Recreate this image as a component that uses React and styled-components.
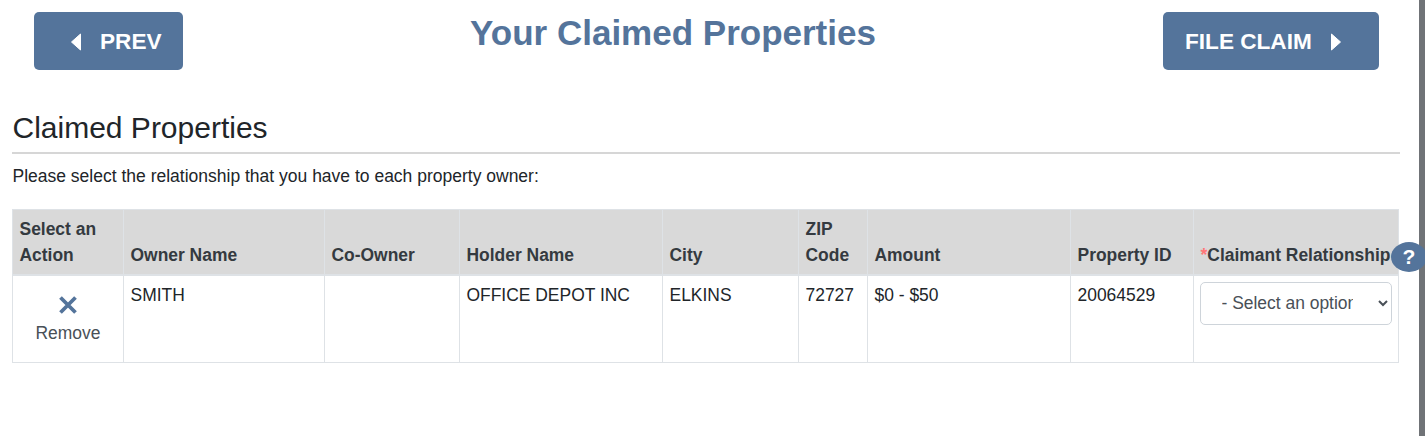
import React from "react";
import styled, { createGlobalStyle } from "styled-components";

const GlobalStyle = createGlobalStyle`
    html, body {
        margin : 0;
        padding : 0;
        background : #fff;
        overflow : hidden;
    }
    body {
        font-family : "Liberation Sans", Arial, sans-serif;
        font-size : 17.45px;
        line-height : 26px;
        color : #212529;
    }
`

const Page = styled.div`
    position : relative;
    display : flex;
    width : 1425px;
    height : 436px;
    overflow : hidden;
`

const Content = styled.main`
    flex : 1;
    padding : 12px 19px 0 12px;
`

const ScrollStrip = styled.div`
    width : 6px;
    background : #707377;
`

const TopBar = styled.div`
    display : flex;
    align-items : flex-start;
    padding : 0 21px 0 22px;
`

const NavButton = styled.button`
    display : flex;
    align-items : center;
    gap : 19px;
    width : ${(p) => p.$width}px;
    height : 58px;
    padding : 2px 0 0 ${(p) => p.$inset}px;
    border : none;
    border-radius : 5px;
    background : #54749b;
    color : #fff;
    font-family : inherit;
    font-size : 22.6px;
    font-weight : bold;
`

const PageTitle = styled.h1`
    flex : 1;
    margin : 0;
    text-align : center;
    color : #54749b;
    font-size : 35px;
    line-height : 42px;
    font-weight : bold;
`

const SectionTitle = styled.h2`
    margin : 40px 0 0;
    padding : 0 0 6px 0.5px;
    border-bottom : 2px solid #d6d6d6;
    font-size : 30px;
    line-height : 36px;
    font-weight : normal;
`

const Intro = styled.p`
    margin : 9px 0 0 0.5px;
    font-size : 17.5px;
`

const Table = styled.table`
    width : 1386px;
    margin-top : 20px;
    table-layout : fixed;
    border-collapse : collapse;
`

const HeadCell = styled.th`
    padding : 6px 6.5px;
    border : 1px solid #dee2e6;
    border-bottom-width : 2px;
    background : #d9d9d9;
    color : #343a40;
    text-align : left;
    vertical-align : bottom;
    font-weight : bold;
    white-space : ${(p) => (p.$nowrap ? "nowrap" : "normal")};
`

const Cell = styled.td`
    height : 87px;
    box-sizing : border-box;
    padding : 6px 6.5px;
    border : 1px solid #dee2e6;
    vertical-align : top;
`

const Required = styled.span`
    color : #f77;
`

const RemoveAction = styled.div`
    display : flex;
    flex-direction : column;
    align-items : center;
    gap : 5px;
    padding-top : 13px;
    color : #495057;
`

const RelationSelect = styled.select`
    display : block;
    width : 192px;
    height : 43px;
    box-sizing : border-box;
    margin : 0 0 0 -1px;
    padding : 0 22px 2px 17px;
    border : 1px solid #ced4da;
    border-radius : 5px;
    background : #fff;
    color : #495057;
    font-family : inherit;
    font-size : 17.45px;
`

const HelpBubble = styled.div`
    position : absolute;
    left : 1391px;
    top : 242px;
    width : 36px;
    height : 30px;
    border-radius : 50%;
    background : #54749b;
    color : #fff;
    font-size : 21px;
    font-weight : bold;
    line-height : 30px;
    text-align : center;
`

const Caret = ({ right }) => (
    <svg width="10" height="18" viewBox="0 0 10 18">
        <path
            d={right ? "M0.5 1 L9.5 9 L0.5 17 Z" : "M9.5 1 L0.5 9 L9.5 17 Z"}
            fill="#fff"
            stroke="#fff"
            strokeLinejoin="round"
        />
    </svg>
)

const CrossIcon = () => (
    <svg width="20" height="20" viewBox="0 0 20 20">
        <path d="M2.5 2.5 L17.5 17.5 M17.5 2.5 L2.5 17.5" stroke="#54749b" strokeWidth="3.8" />
    </svg>
)

const columns = [
    { label: "Select an Action", width: 111 },
    { label: "Owner Name", width: 201 },
    { label: "Co-Owner", width: 135 },
    { label: "Holder Name", width: 203 },
    { label: "City", width: 136 },
    { label: "ZIP Code", width: 69 },
    { label: "Amount", width: 203 },
    { label: "Property ID", width: 123 },
]

export default function App() {
    return (
        <>
            <GlobalStyle />
            <Page>
                <Content>
                    <TopBar>
                        <NavButton $width={149} $inset={37}>
                            <Caret />
                            PREV
                        </NavButton>
                        <PageTitle>Your Claimed Properties</PageTitle>
                        <NavButton $width={216} $inset={22}>
                            FILE CLAIM
                            <Caret right />
                        </NavButton>
                    </TopBar>
                    <SectionTitle>Claimed Properties</SectionTitle>
                    <Intro>Please select the relationship that you have to each property owner:</Intro>
                    <Table>
                        <colgroup>
                            {columns.map((c) => (
                                <col key={c.label} style={{ width: c.width }} />
                            ))}
                            <col style={{ width: 205 }} />
                        </colgroup>
                        <thead>
                            <tr>
                                {columns.map((c) => (
                                    <HeadCell key={c.label}>{c.label}</HeadCell>
                                ))}
                                <HeadCell $nowrap>
                                    <Required>*</Required>Claimant Relationship
                                </HeadCell>
                            </tr>
                        </thead>
                        <tbody>
                            <tr>
                                <Cell>
                                    <RemoveAction>
                                        <CrossIcon />
                                        Remove
                                    </RemoveAction>
                                </Cell>
                                <Cell>SMITH</Cell>
                                <Cell />
                                <Cell>OFFICE DEPOT INC</Cell>
                                <Cell>ELKINS</Cell>
                                <Cell>72727</Cell>
                                <Cell>$0 - $50</Cell>
                                <Cell>20064529</Cell>
                                <Cell>
                                    <RelationSelect defaultValue="">
                                        <option value="">- Select an option -</option>
                                    </RelationSelect>
                                </Cell>
                            </tr>
                        </tbody>
                    </Table>
                </Content>
                <ScrollStrip />
                <HelpBubble>?</HelpBubble>
            </Page>
        </>
    )
}
